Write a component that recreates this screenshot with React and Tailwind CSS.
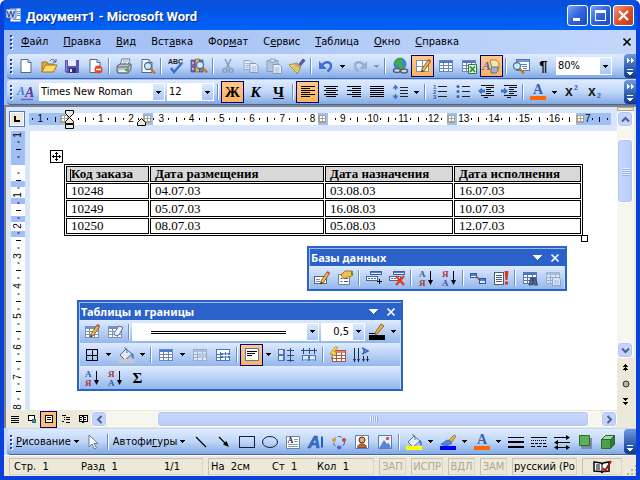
import React from "react";

const cx = (...a) => a.filter(Boolean).join(" ");

/* ---------- primitives ---------- */

const Svg = ({ w = 16, h = 16, children, crisp }) => (
  <svg width={w} height={h} viewBox={`0 0 ${w} ${h}`} fill="none" className="shrink-0 overflow-visible" shapeRendering={crisp ? "crispEdges" : undefined} aria-hidden="true">
    {children}
  </svg>
);

const Btn = ({ label, on, children }) => (
  <button type="button" aria-label={label} title={label} className={cx("flex h-[22px] w-[23px] shrink-0 items-center justify-center", on && "border border-[#000080] bg-linear-to-b from-[#ffc98a] to-[#fbb25e]")}>
    {children}
  </button>
);

const Tri = ({ color = "#000" }) => (
  <Svg w={5} h={3} crisp><path d="M0 0h5v1h-1v1h-1v1h-1v-1h-1v-1h-1z" fill={color} /></Svg>
);

const Drop = ({ label, color }) => (
  <button type="button" aria-label={label} className="flex h-[22px] w-[11px] shrink-0 items-center justify-center"><Tri color={color} /></button>
);

const Sep = () => (
  <span className="flex w-[6px] shrink-0 justify-center"><span className="h-4 w-px bg-[#6a8ccb]" /><span className="h-4 w-px bg-white" /></span>
);

const Grip = () => (
  <span className="flex w-[6px] shrink-0 flex-col items-center gap-[2px]">
    {[0, 1, 2, 3].map((i) => <span key={i} className="h-[2px] w-[2px] bg-[#27418e] shadow-[1px_1px_0_#fff]" />)}
  </span>
);

const Combo = ({ label, value, className, line, right }) => (
  <span className={cx("relative flex h-[18px] shrink-0 items-stretch bg-white", className)}>
    <select aria-label={label} defaultValue={value} className={cx("w-full appearance-none bg-transparent pr-4 pl-[2px] text-[11px] leading-4 outline-none", right && "text-right", line && "text-transparent")}>
      <option>{value}</option>
    </select>
    {line && <span className="pointer-events-none absolute top-[8px] right-[33px] left-[19px] h-[3px] border-y border-black" />}
    <span className="pointer-events-none absolute inset-y-px right-px flex w-[11px] items-center justify-center bg-linear-to-b from-[#dce9fc] to-[#a9c6f2]"><Tri /></span>
  </span>
);

const OptionsCap = ({ more }) => (
  <button type="button" aria-label="Параметры панелей инструментов" className="ml-auto flex w-[12px] shrink-0 flex-col items-center justify-between self-stretch rounded-l-sm bg-linear-to-b from-[#7199dc] via-[#3767b8] to-[#11388c] pt-1 pb-[3px]">
    <Svg w={7} h={5} crisp>{more && <path d="M0 0h1v1h1v1h1v1h-1v1h-1v1h-1zM4 0h1v1h1v1h1v1h-1v1h-1v1h-1z" fill="#fff" />}</Svg>
    <Svg w={6} h={6} crisp><path d="M0 0h6v1h-6zM0 3h6v1h-1v1h-1v1h-2v-1h-1v-1h-1z" fill="#fff" /></Svg>
  </button>
);

const Bar = ({ className, children }) => (
  <div role="toolbar" className={cx("ml-[3px] flex shrink-0 items-center overflow-hidden rounded-l-sm border-b border-[#3f66b2] bg-linear-to-b from-[#dfebfe] via-[#c0d7f8] to-[#82a9e4] pl-px", className)}>
    {children}
  </div>
);

/* ---------- icons ---------- */

const page = "M3 1.5h7l3 3v10h-10z";
const PageI = ({ children }) => (
  <Svg>
    <path d={page} fill="#fff" stroke="#55668c" />
    <path d="M10 1.5v3h3" stroke="#55668c" fill="#d6e0f2" />
    {children}
  </Svg>
);
const Lens = ({ x = 0, y = 0 }) => (
  <g transform={`translate(${x} ${y})`}>
    <path d="M9.5 9.5l4.500 5" stroke="#c27a1c" strokeWidth="2.5" />
    <circle cx="7" cy="7" r="3.5" fill="#cfeaf8" stroke="#51719b" strokeWidth="1.3" />
  </g>
);
const OpenI = () => (
  <Svg>
    <path d="M1 14v-10h5l1 2h6v2" fill="#e0a93b" stroke="#a97414" />
    <path d="M1 14l3.500-7h11.500l-3.500 7z" fill="#ffda72" stroke="#a97414" />
    <path d="M9 3c2-3 4-2 5 1m1-3v3h-3" stroke="#3c62b0" />
  </Svg>
);
const SaveI = () => (
  <Svg crisp>
    <path d="M1 2h14v13h-13l-1-1z" fill="#5a52b8" />
    <path d="M4 2h8v6h-8z" fill="#e8ecfa" />
    <path d="M2 3h1v10h-1z" fill="#8f88dc" />
    <path d="M5 10h7v5h-7z" fill="#33306f" />
    <path d="M6 11h2v3h-2z" fill="#dfe4f4" />
  </Svg>
);
const PrintI = () => (
  <Svg>
    <path d="M6 1h8l-2 6h-8z" fill="#fff" stroke="#6c7688" />
    <path d="M7 3h5M6.500 5h4" stroke="#8aa0c8" />
    <path d="M1 8l3-2h11v5l-3 4h-10l-1-1z" fill="#bcc3cc" stroke="#535c6b" />
    <path d="M1.500 9h10.500v5.500M12 9l3-3" stroke="#616b78" />
    <path d="M3 12h7v2h-7z" fill="#efefef" />
    <path d="M9 11h4v2h-4z" fill="#2fc02f" />
  </Svg>
);
const SpellI = () => (
  <Svg>
    <text x="0" y="6" fontSize="7" fontWeight="700" fontFamily="Liberation Sans, sans-serif" fill="#1c1c1c">ABC</text>
    <path d="M3 10l3 4 8-9" stroke="#3c6ed0" strokeWidth="2.4" />
  </Svg>
);
const BookI = () => (
  <Svg>
    <path d="M0 2h4v12h-4z" fill="#7664c2" stroke="#463a88" strokeWidth=".7" />
    <path d="M4.500 1h4v13h-4z" fill="#e4b04a" stroke="#8c6514" strokeWidth=".7" />
    <path d="M8.500 2h3.500v12h-3.500z" fill="#6487d4" stroke="#324e92" strokeWidth=".7" />
    <path d="M1 5h2M5.500 4h2M1 11h2" stroke="#fff" />
    <Lens x={2} />
  </Svg>
);
const CutI = () => (
  <Svg>
    <path d="M5 1l4.500 9M11 1l-4.500 9" stroke="#8c9dbc" strokeWidth="1.6" />
    <circle cx="5" cy="12.500" r="2" stroke="#8c9dbc" strokeWidth="1.6" />
    <circle cx="11" cy="12.500" r="2" stroke="#8c9dbc" strokeWidth="1.6" />
  </Svg>
);
const CopyI = () => (
  <Svg>
    <path d="M1 2.500h6l2 2v7h-8z" fill="#dfe8f7" stroke="#93a6c8" />
    <path d="M2.500 5.500h4M2.500 7.500h5M2.500 9.500h3" stroke="#a5b5d2" />
    <path d="M7 5.500h6l2 2v7h-8z" fill="#e9effa" stroke="#8699bd" />
    <path d="M8.500 9h5M8.500 11h5M8.500 13h5" stroke="#a5b5d2" />
  </Svg>
);
const PasteI = () => (
  <Svg>
    <path d="M1 2.500h11v11h-11z" fill="#b4c3de" stroke="#8a9cbe" />
    <path d="M4 1h5v3h-5z" fill="#dde6f5" stroke="#8a9cbe" />
    <path d="M7 6.500h6l2.500 2v7h-8.500z" fill="#e9effa" stroke="#8699bd" />
    <path d="M8.500 10h5M8.500 12h5M8.500 14h5" stroke="#a5b5d2" />
  </Svg>
);
const BrushI = () => (
  <Svg>
    <path d="M10 6l4-5 2 1.500-4 5z" fill="#5464b8" stroke="#2c3778" strokeWidth=".7" />
    <path d="M0 7l8-2 4 4-4 6.500c-2-3-5-5-8-8.500z" fill="#f6de7c" stroke="#94701c" strokeWidth=".8" />
    <path d="M7 5l5 4-1.500 2-5.500-5z" fill="#b8a468" />
    <path d="M3 8l5 5M5 7l4 5" stroke="#b98f2c" strokeWidth=".8" />
  </Svg>
);
const UndoI = ({ color, flip }) => (
  <Svg>
    <g transform={flip ? "translate(16 0) scale(-1 1)" : undefined}>
      <path d="M4 8c2-5 9-5 9 0 0 2-1.500 4-3.500 5.500" stroke={color} strokeWidth="2.4" />
      <path d="M1 3v8h8z" fill={color} />
    </g>
  </Svg>
);
const LinkI = () => (
  <Svg>
    <circle cx="8" cy="6" r="6" fill="#3d86d8" stroke="#285190" strokeWidth=".6" />
    <path d="M3 3c2-3 6-3 8-1l-2 3 3 3-3 4-2-1-1-4-3-1z" fill="#3fae3f" />
    <ellipse cx="5" cy="12.500" rx="3.500" ry="2" stroke="#4f5f74" strokeWidth="1.5" fill="#cfd9e6" />
    <ellipse cx="12" cy="13" rx="3.500" ry="2" stroke="#4f5f74" strokeWidth="1.5" fill="#cfd9e6" />
  </Svg>
);
const Pencil = () => (
  <g>
    <path d="M7 11l6-9 2.500 1.500-6 9-3 1.500z" fill="#f2b64c" stroke="#7a4a10" strokeWidth=".8" />
    <path d="M12.500 2.500l1-1.500 2.500 1.500-1 1.500z" fill="#c0504d" />
    <path d="M6.500 14l.5-2 1.500 1z" fill="#111" />
  </g>
);
const grid = (c, head, bg = "#fff") => (
  <g shapeRendering="crispEdges">
    <path d="M1 2h14v12h-14z" fill={bg} />
    <path d="M1 2h14v3h-14z" fill={head} />
    <path d="M1.500 2v12M5.500 5v9M10.500 5v9M14.500 2v12M1 2.500h14M1 7.500h14M1 10.500h14M1 13.500h14" stroke={c} />
  </g>
);
const TableI = () => <Svg>{grid("#6a87bd", "#4a78cf")}</Svg>;
const TablePenI = () => (
  <Svg>
    <g shapeRendering="crispEdges"><path d="M1 2h13v12h-13z" fill="#fff" /><path d="M1.500 2v12M7.500 2v12M13.500 2v12M1 2.500h13M1 8.500h13M1 13.500h13" stroke="#7c8fae" /></g>
    <Pencil />
  </Svg>
);
const ExcelI = () => (
  <Svg>
    {grid("#6a87bd", "#4a78cf")}
    <path d="M7.500 6.500h8v9h-8z" fill="#e6f5e2" stroke="#2f7d32" />
    <path d="M9 8.500l5 5.500M14 8.500l-5 5.500" stroke="#2f8c33" strokeWidth="1.8" />
  </Svg>
);
const DrawI = () => (
  <Svg>
    <path d="M6 2h6l3 3v5l-3 1h-4z" fill="#f4e3a8" stroke="#8c7430" strokeWidth=".8" />
    <text x="-2" y="12" fontSize="13" fontWeight="700" fontStyle="italic" fontFamily="Liberation Serif, serif" fill="#4f63c4">A</text>
    <path d="M8 9h6v4l-2 2h-5v-4z" fill="#9fb0c8" stroke="#4c5f80" strokeWidth=".8" />
  </Svg>
);
const MapI = () => (
  <Svg>
    <g shapeRendering="crispEdges"><path d="M3.500 1.500h13v11h-13z" fill="#fff" stroke="#5874a8" /><path d="M4 2h12v2h-12z" fill="#6e9be0" /><path d="M6 6.500h8M9 8.500h5M10 10.500h4" stroke="#5a80c0" /></g>
    <g transform="translate(-3 1)"><Lens /></g>
  </Svg>
);
const Glyph = ({ t, cls }) => <span className={cx("text-[15px] leading-4", cls)}>{t}</span>;
const serif = "font-['Liberation_Serif',serif]";

const Lines = ({ spans }) => (
  <Svg w={16} h={14} crisp>{spans.map(([a, b], i) => <path key={i} d={`M${a} ${i * 2 + 1}.5h${b - a}`} stroke="#000" />)}</Svg>
);
const L = [[1, 15], [1, 10], [1, 15], [1, 10], [1, 15], [1, 10]];
const C = [[1, 15], [3, 13], [1, 15], [3, 13], [1, 15], [3, 13]];
const R = [[1, 15], [6, 15], [1, 15], [6, 15], [1, 15], [6, 15]];
const J = [[1, 15], [1, 15], [1, 15], [1, 15], [1, 15], [1, 15]];

const SpacingI = () => (
  <Svg>
    <path d="M3.500 2v4M3.500 10v4" stroke="#3465b8" /><path d="M0.500 4.500l3-4 3 4zM0.500 11.500l3 4 3-4z" fill="#3b74cf" />
    <path d="M8 3.500h8M8 6.500h8M8 9.500h8M8 12.500h8" stroke="#222" shapeRendering="crispEdges" />
  </Svg>
);
const NumI = () => (
  <Svg>
    {[1, 2, 3].map((n) => <text key={n} x="1" y={n * 5} fontSize="6" fontWeight="700" fontFamily="Liberation Sans, sans-serif" fill="#2f5cb4">{n}</text>)}
    <path d="M6 2.500h9M6 7.500h9M6 12.500h9" stroke="#222" shapeRendering="crispEdges" />
  </Svg>
);
const BulI = () => (
  <Svg>
    {[2.5, 7.5, 12.5].map((y) => <circle key={y} cx="3" cy={y} r="1.500" fill="#3a62b5" />)}
    <path d="M7 2.500h8M7 7.500h8M7 12.500h8" stroke="#222" shapeRendering="crispEdges" />
  </Svg>
);
const IndentI = ({ right }) => (
  <Svg>
    <path d="M3 1.500h13M8 3.500h8M8 5.500h5M8 7.500h8M8 9.500h5M3 11.500h13M6 13.500h4" stroke="#111" shapeRendering="crispEdges" />
    <path d={right ? "M0 5.500h3v-2l4 3.500-4 3.500v-2h-3z" : "M7 5.500h-3v-2l-4 3.500 4 3.500v-2h3z"} fill="#3c72d0" />
  </Svg>
);
const ColorA = () => (
  <Svg>
    <text x="3" y="10" fontSize="14" fontWeight="700" fontFamily="Liberation Serif, serif" fill="#3a5fae">A</text>
    <path d="M0 12h16v4h-16z" fill="#ff6600" />
  </Svg>
);
const XI = ({ sub }) => (
  <Svg>
    <text x="1" y="12" fontSize="14" fontWeight="700" fontFamily="Liberation Sans, sans-serif" fill="#1c1c1c">x</text>
    <text x="10" y={sub ? 14 : 6} fontSize="7" fontWeight="700" fontFamily="Liberation Sans, sans-serif" fill="#3465b8">2</text>
  </Svg>
);
const SortI = ({ desc }) => (
  <Svg>
    <text x="1" y="7" fontSize="9" fontWeight="700" fontFamily="Liberation Serif, serif" fill={desc ? "#a33a3a" : "#39599f"}>{desc ? "Я" : "А"}</text>
    <text x="1" y="16" fontSize="9" fontWeight="700" fontFamily="Liberation Serif, serif" fill={desc ? "#39599f" : "#a33a3a"}>{desc ? "А" : "Я"}</text>
    <path d="M12.500 1v11" stroke="#000" /><path d="M10 10h5l-2.500 5z" fill="#000" />
  </Svg>
);
const RecI = ({ del }) => (
  <Svg>
    <g shapeRendering="crispEdges"><path d="M4.500 1.500h11v3h-11z" fill="#dbe7fb" stroke="#3c5fa8" /><path d="M5 2h10v1h-10z" fill="#4e7fd8" /><path d="M0.500 6.500h11v4h-11z" fill="#fff" stroke="#50658c" /><path d="M2 8.500h2M5 8.500h2M8 8.500h2" stroke="#50658c" /></g>
    {del ? <path d="M7 6l8 9M15 6l-8 9" stroke="#e8391c" strokeWidth="2.4" /> : <path d="M13.500 9v5M11 11.500h5" stroke="#000" shapeRendering="crispEdges" />}
  </Svg>
);
const FormI = () => (
  <Svg>
    <path d="M1.500 4.500h11v10h-11z" fill="#fff" stroke="#707c92" /><path d="M3.500 8.500h2M3.500 11.500h2M7 8.500h4M7 11.500h4" stroke="#556" />
    <path d="M4 5l4-4h7l1 4-3 2h-3l-3 2z" fill="#f0c04a" stroke="#8a6418" strokeWidth=".8" /><path d="M14 1h2v4h-2z" fill="#3fa23f" />
  </Svg>
);
const EditI = () => (
  <Svg>
    <g shapeRendering="crispEdges"><path d="M0.500 6.500h12v7h-12z" fill="#fff" stroke="#50658c" /><path d="M2 9.500h4M2 11.500h4" stroke="#7b8aa8" /></g>
    <Pencil />
  </Svg>
);
const MergeI = () => (
  <Svg><g shapeRendering="crispEdges"><path d="M0.500 3.500h6v4h-6z" fill="#4e7fd8" stroke="#2f559c" /><path d="M9.500 8.500h6v5h-6z" fill="#dbe7fb" stroke="#2f559c" /><path d="M10 9h5v2h-5z" fill="#4e7fd8" /><path d="M1 6h5v1h-5z" fill="#fff" /></g><path d="M7 7l2.500 3" stroke="#c2352b" strokeWidth="1.400" /></Svg>
);
const ReportI = () => (
  <Svg><g shapeRendering="crispEdges"><path d="M1.500 2.500h9v12h-9z" fill="#fff" stroke="#4e5a70" /><path d="M3 5.500h6M3 7.500h6M3 9.500h6M3 11.500h6" stroke="#4e5a70" /></g><path d="M11.500 1h4l-1 9h-2zM12 11.500h3v3h-3z" fill="#d8361c" /></Svg>
);
const FindI = () => (
  <Svg>{grid("#5b77ad", "#4a78cf")}<path d="M7 15l1.500-7h2v3h1v-3h2l2 7h-3.500v-2h-1.500v2z" fill="#53698f" stroke="#263a60" strokeWidth=".8" /></Svg>
);
const InsI = () => (
  <Svg><g opacity=".75">{grid("#93a6c8", "#9fb3d6", "#e6edf9")}<path d="M7.500 7.500h6l2 2v6h-8z" fill="#e9effa" stroke="#8699bd" /><path d="M9 11h5M9 13h5" stroke="#a5b5d2" /></g></Svg>
);
const DrawTab = ({ erase }) => (
  <Svg>{grid("#7c90b4", "#6f93d2")}{erase ? <path d="M7 9l5-7 4 1.500-4 7.500-4 .500z" fill="#eef2fb" stroke="#66738c" /> : <g transform="translate(0 -1)"><Pencil /></g>}</Svg>
);
const Bucket = ({ bar, gray }) => (
  <Svg>
    <path d="M2 8l6-6 6 5-7 6z" fill={gray ? "#e1e8f3" : "#e8eff9"} stroke="#55698c" />
    <path d="M6 1c2-1 3 1 3 5" stroke="#55698c" /><path d="M13 6c3 0 3 3 2.500 6-1.500 0-2-3-2.500-6z" fill="#3f76d2" />
    <path d="M0 12h16v4h-16z" fill={bar} />
  </Svg>
);
const BrushLine = () => (
  <Svg>
    <path d="M9 6l5-5 2 1-4 6z" fill="#e8b44c" stroke="#8a5c14" strokeWidth=".7" /><path d="M1 10c2 0 3-3 7-4l4 3c-3 3-8 3-11 1z" fill="#4d86dd" stroke="#2d579c" strokeWidth=".7" />
    <path d="M0 12h16v4h-16z" fill="#0000ff" />
  </Svg>
);
const PenColor = () => (
  <Svg><path d="M0 9.500h7" stroke="#000" /><path d="M6 9l6-9 3 2-7 8-2 .500z" fill="#efae4a" stroke="#7a4a10" strokeWidth=".8" /><path d="M0 11h16v5h-16z" fill="#000" /></Svg>
);
const Chevron = ({ dir }) => (
  <Svg w={9} h={9}><path d={{ up: "M1 6.500l3.500-3.500 3.500 3.500", down: "M1 2.500l3.500 3.500 3.500-3.500", left: "M6.500 1l-3.500 3.500 3.500 3.500", right: "M2.500 1l3.500 3.500-3.500 3.500" }[dir]} stroke="#4d6185" strokeWidth="2" /></Svg>
);

/* ---------- pieces ---------- */

const ScrollBtn = ({ dir, label }) => (
  <button type="button" aria-label={label} className="flex size-4 shrink-0 items-center justify-center rounded-sm border border-white bg-[#c3d3fc] shadow-[inset_0_0_0_1px_#b4c8f6]"><Chevron dir={dir} /></button>
);

const menus = [["", "Ф", "айл"], ["", "П", "равка"], ["", "В", "ид"], ["Вст", "а", "вка"], ["Фор", "м", "ат"], ["С", "е", "рвис"], ["", "Т", "аблица"], ["", "О", "кно"], ["", "С", "правка"]];

const scale = (count, zero) =>
  Array.from({ length: count }, (_, i) => {
    const q = i - zero;
    if (q === 0) return "";
    if (q % 4 === 0) return String(Math.abs(q / 4));
    return q % 2 === 0 ? "|" : ".";
  });

const Mark = ({ m }) =>
  m === "|" ? <span className="h-[5px] w-px bg-black" /> : m === "." ? <span className="h-[2px] w-px bg-black" /> : m;

const hScale = scale(77, 5);
const vScale = scale(37, 4);

const ColMark = ({ className }) => (
  <span className={cx("absolute inset-y-0 w-[10px] bg-[#a0bff5] py-[2px]", className)}>
    <span className="block h-[8px] w-[8px] border border-[#a8a290] bg-[repeating-linear-gradient(90deg,#a8a290_0_1px,transparent_1px_3px),repeating-linear-gradient(0deg,#a8a290_0_1px,#fff_1px_3px)]" />
  </span>
);

const heads = ["Код заказа", "Дата размещения", "Дата назначения", "Дата исполнения"];
const rows = [
  ["10248", "04.07.03", "03.08.03", "16.07.03"],
  ["10249", "05.07.03", "16.08.03", "10.07.03"],
  ["10250", "08.07.03", "05.08.03", "12.07.03"],
];

const Floating = ({ title, className, children }) => (
  <section aria-label={title} className={cx("absolute border-2 border-[#2a62c9] bg-[#2a62c9]", className)}>
    <div className="flex h-[18px] items-center border-t border-l border-[#9dbdf0] pr-1 pl-px text-white">
      <h2 className="grow font-['Noto_Sans','DejaVu_Sans',sans-serif] text-[11px] leading-4 font-bold">{title}</h2>
      <button type="button" aria-label="Параметры" className="mr-[6px] flex size-3 items-center justify-center"><Svg w={9} h={5} crisp><path d="M0 0h9v1h-1v1h-1v1h-1v1h-1v1h-1v-1h-1v-1h-1v-1h-1v-1h-1z" fill="#fff" /></Svg></button>
      <button type="button" aria-label="Закрыть" className="flex size-3 items-center justify-center"><Svg w={8} h={8}><path d="M.5.5l7 7M7.500.5l-7 7" stroke="#fff" strokeWidth="1.600" /></Svg></button>
    </div>
    {children}
  </section>
);

const FRow = ({ children }) => (
  <div className="flex h-[23px] items-center border-x border-[#c9dcfa] bg-linear-to-b from-[#dfebfe] to-[#94b7ec]">{children}</div>
);

const WinBtn = ({ label, red, children }) => (
  <button type="button" aria-label={label} className={cx("flex size-[21px] items-center justify-center rounded-[3px] border border-white", red ? "bg-linear-to-br from-[#f0927a] via-[#e0512c] to-[#b83a18]" : "bg-linear-to-br from-[#7ba2f5] via-[#2f62dc] to-[#1b49c0]")}>{children}</button>
);

const Panel = ({ className, children }) => (
  <span className={cx("flex h-[17px] shrink-0 items-center border border-t-[#c5c2b5] border-r-[#d8d5c8] border-b-[#d8d5c8] border-l-[#c5c2b5] whitespace-pre", className)}>{children}</span>
);

/* ---------- app ---------- */

export default function App() {
  return (
    <div className="flex h-screen min-h-[400px] w-full flex-col overflow-hidden rounded-t-md border-x-4 border-b-4 border-[#0a41d8] bg-[#0a41d8] font-['DejaVu_Sans_Condensed','DejaVu_Sans',sans-serif] text-[11px] leading-4 text-black">
      {/* title bar */}
      <header className="-mx-1 flex h-[30px] shrink-0 items-center gap-[4px] rounded-t-md bg-linear-to-b from-[#0a4fd8] via-[#0058ea] to-[#0062f8] pr-[6px] pl-[6px]">
        <Svg>
          <path d="M4.500 1.500h10v13h-10z" fill="#fff" stroke="#8aa5d8" /><path d="M11 4.500h3M11 6.500h3M11 8.500h3M7 12.500h7" stroke="#6487c8" />
          <path d="M0 2h10v9h-10z" fill="#dce8fb" stroke="#2b55a8" strokeWidth=".8" />
          <text x="0.500" y="10" fontSize="9" fontWeight="700" fontFamily="Liberation Sans, sans-serif" fill="#1f4ca8">W</text>
        </Svg>
        <h1 className="grow pt-[4px] font-['Roboto','Noto_Sans',sans-serif] text-[13px] leading-4 font-bold text-white [text-shadow:1px_1px_0_#0a2a80]">Документ1 - Microsoft Word</h1>
        <div className="flex gap-[2px]">
          <WinBtn label="Свернуть"><Svg w={13} h={13} crisp><path d="M2 9h7v3h-7z" fill="#fff" /></Svg></WinBtn>
          <WinBtn label="Развернуть"><Svg w={13} h={13} crisp><path d="M1.500 1.500h10v10h-10z" stroke="#fff" /><path d="M1 1h11v3h-11z" fill="#fff" /></Svg></WinBtn>
          <WinBtn label="Закрыть" red><Svg w={13} h={13}><path d="M2 2l9 9M11 2l-9 9" stroke="#fff" strokeWidth="2.200" /></Svg></WinBtn>
        </div>
      </header>

      {/* menus and toolbars */}
      <div className="shrink-0 bg-linear-to-r from-[#9ebdf5] to-[#c3d7fa]">
        <nav className="flex h-6 items-center gap-[15px] pr-1 pl-1">
          <Grip />
          {menus.map(([a, b, c], i) => (
            <button type="button" key={i} className={cx("shrink-0", i === 0 && "-ml-2")}>{a}<u>{b}</u>{c}</button>
          ))}
          <button type="button" aria-label="Закрыть документ" className="mr-[1px] ml-auto"><Svg w={8} h={8}><path d="M.5.5l7 7M7.500.5l-7 7" stroke="#000" strokeWidth="1.600" /></Svg></button>
        </nav>

        <Bar className="h-[25px]">
          <Grip />
          <Btn label="Создать"><PageI /></Btn>
          <Btn label="Открыть"><OpenI /></Btn>
          <Btn label="Сохранить"><SaveI /></Btn>
          <Btn label="Разрешение"><PageI><circle cx="11.500" cy="11.500" r="4" fill="#e0492a" /><path d="M9 11.500h5" stroke="#fff" strokeWidth="1.600" /></PageI></Btn>
          <Sep />
          <Btn label="Печать"><PrintI /></Btn>
          <Btn label="Предварительный просмотр"><PageI><Lens x={2} y={1} /></PageI></Btn>
          <Sep />
          <Btn label="Правописание"><SpellI /></Btn>
          <Btn label="Справочники"><BookI /></Btn>
          <Sep />
          <Btn label="Вырезать"><CutI /></Btn>
          <Btn label="Копировать"><CopyI /></Btn>
          <Btn label="Вставить"><PasteI /></Btn>
          <Btn label="Формат по образцу"><BrushI /></Btn>
          <Sep />
          <Btn label="Отменить"><UndoI color="#3d72d0" /></Btn>
          <Drop label="Список отмены" />
          <Btn label="Вернуть"><UndoI color="#98aed4" flip /></Btn>
          <Drop label="Список возврата" color="#8c93a8" />
          <Sep />
          <Btn label="Гиперссылка"><LinkI /></Btn>
          <Btn label="Таблицы и границы" on><TablePenI /></Btn>
          <Btn label="Добавить таблицу"><TableI /></Btn>
          <Btn label="Добавить таблицу Excel"><ExcelI /></Btn>
          <Btn label="Рисование" on><DrawI /></Btn>
          <Sep />
          <Btn label="Схема документа"><MapI /></Btn>
          <Btn label="Непечатаемые знаки"><Glyph t="¶" cls="font-['Liberation_Sans',sans-serif] font-bold" /></Btn>
          <Combo label="Масштаб" value="80%" className="ml-px w-14" />
          <OptionsCap more />
        </Bar>

        <Bar className="mt-px h-[25px]">
          <Grip />
          <Btn label="Стили">
            <Svg><text x="-1" y="11" fontSize="12" fontStyle="italic" fontFamily="Liberation Serif, serif" fontWeight="700" fill="#4a78cf">A</text><text x="7" y="13" fontSize="14" fontStyle="italic" fontFamily="Liberation Serif, serif" fontWeight="700" fill="#5a3a9c">A</text><path d="M3 15.500h12" stroke="#8a5ac8" strokeWidth="1.500" /></Svg>
          </Btn>
          <Combo label="Шрифт" value="Times New Roman" className="ml-[2px] w-[126px]" />
          <Combo label="Размер" value="12" className="mr-px ml-[2px] w-[47px]" />
          <Sep />
          <Btn label="Полужирный" on><Glyph t="Ж" cls={cx(serif, "font-bold")} /></Btn>
          <Btn label="Курсив"><Glyph t="К" cls={cx(serif, "font-bold italic")} /></Btn>
          <Btn label="Подчеркнутый"><Glyph t="Ч" cls={cx(serif, "font-bold underline")} /></Btn>
          <Sep />
          <Btn label="По левому краю" on><Lines spans={L} /></Btn>
          <Btn label="По центру"><Lines spans={C} /></Btn>
          <Btn label="По правому краю"><Lines spans={R} /></Btn>
          <Btn label="По ширине"><Lines spans={J} /></Btn>
          <Btn label="Междустрочный интервал"><SpacingI /></Btn>
          <Drop label="Выбор интервала" />
          <Sep />
          <Btn label="Нумерация"><NumI /></Btn>
          <Btn label="Маркеры"><BulI /></Btn>
          <Btn label="Уменьшить отступ"><IndentI /></Btn>
          <Btn label="Увеличить отступ"><IndentI right /></Btn>
          <Sep />
          <Btn label="Цвет шрифта"><ColorA /></Btn>
          <Drop label="Выбор цвета шрифта" />
          <Btn label="Надстрочный"><XI /></Btn>
          <Btn label="Подстрочный"><XI sub /></Btn>
          <OptionsCap more />
        </Bar>
      </div>

      {/* document */}
      <main className="relative flex min-h-0 grow border-t-2 border-l-2 border-[#858278] bg-[#d8e6fb]">
        <div className="flex min-w-0 grow flex-col">
          <div className="flex h-6 shrink-0 items-center">
            <button type="button" aria-label="Тип табуляции" className="ml-[3px] flex size-[16px] shrink-0 items-center justify-center border border-[#4a78cf] bg-[#ece9d8] shadow-[inset_0_0_0_1px_#fff]"><Svg w={6} h={6} crisp><path d="M0 0h2v4h4v2h-6z" fill="#000" /></Svg></button>
            <div className="relative ml-[4px] h-3 w-[582px] shrink-0 bg-white font-['Liberation_Sans',sans-serif] text-[10px] leading-3">
              <span className="absolute inset-y-0 left-0 w-[34px] bg-[#a0bff5]" />
              <span className="absolute inset-y-0 right-0 w-[28px] bg-[#a0bff5]" />
              <div className="relative flex h-3">
                {hScale.map((m, i) => <span key={i} className="flex min-w-0 flex-1 items-center justify-center">{i === 73 ? "" : <Mark m={m} />}</span>)}
              </div>
              <ColMark className="left-[31px]" />
              <ColMark className="left-[114px]" />
              <ColMark className="left-[289px]" />
              <ColMark className="left-[418px]" />
              <ColMark className="left-[547px]" />
              <span className="absolute top-0 left-[556px]">7</span>
              <span className="absolute -top-[3px] left-[36px]">
                <Svg w={10} h={20}><path d="M.5 .5h8v3l-4 4-4-4zM.5 13.500v-2l4-4 4 4v2zM.5 14.500h8v4h-8z" fill="#ece9d8" stroke="#000" /></Svg>
              </span>
              <span className="absolute top-[5px] left-[108px]"><Svg w={10} h={8}><path d="M.5 7.500v-3l4-4 4 4v3z" fill="#ece9d8" stroke="#000" /></Svg></span>
            </div>
          </div>

          <div className="flex min-h-0 grow overflow-hidden">
            <div className="w-6 shrink-0 overflow-hidden">
              <div className="relative ml-[5px] h-[280px] w-[14px] bg-white font-['Liberation_Sans',sans-serif] text-[10px] leading-3">
                <span className="absolute inset-x-0 top-0 h-[34px] bg-[#a0bff5]" />
                <span className="absolute inset-x-0 top-[50px] h-[6px] bg-[#a0bff5]" />
                <span className="absolute inset-x-0 top-[67px] h-[6px] bg-[#a0bff5]" />
                <span className="absolute inset-x-0 top-[85px] h-[6px] bg-[#a0bff5]" />
                <span className="absolute inset-x-0 top-[100px] h-[6px] bg-[#a0bff5]" />
                <div className="relative flex h-full flex-col">
                  {vScale.map((m, i) => (
                    <span key={i} className="flex min-h-0 flex-1 items-center justify-center"><span className="flex -rotate-90 items-center justify-center"><Mark m={m} /></span></span>
                  ))}
                </div>
              </div>
            </div>

            <article className="grow bg-white pt-[33px] pl-[34px] font-['Liberation_Serif',serif] text-[13px] leading-[14px]">
              <div className="relative w-[519px]">
                <table className="w-full table-fixed border-separate border-spacing-px border border-black">
                  <colgroup><col className="w-[83px]" /><col className="w-[174px]" /><col className="w-[128px]" /><col /></colgroup>
                  <thead>
                    <tr>{heads.map((h, i) => <th key={h} className="h-[16px] border border-black bg-[#d8d8d8] px-[4px] py-0 text-left font-bold whitespace-nowrap">{i === 0 && <span className="-ml-px inline-block h-3 w-px bg-black align-middle" />}{h}</th>)}</tr>
                  </thead>
                  <tbody>
                    {rows.map((r, i) => <tr key={r[0]}>{r.map((c) => <td key={c} className={cx("border border-black px-[4px] py-0", i === 1 ? "h-[17px]" : "h-[16px]")}>{c}</td>)}</tr>)}
                  </tbody>
                </table>
                <span className="absolute -top-[14px] -left-[14px] flex size-[13px] items-center justify-center border border-black bg-white"><Svg w={9} h={9} crisp><path d="M4 0h1v4h4v1h-4v4h-1v-4h-4v-1h4zM3 1h3v1h-3zM3 7h3v1h-3zM1 3h1v3h-1zM7 3h1v3h-1z" fill="#000" /></Svg></span>
                <span className="absolute -right-[5px] -bottom-[6px] size-[7px] border border-black bg-white" />
              </div>
            </article>
          </div>

          {/* view buttons and horizontal scroll */}
          <div className="flex h-[18px] shrink-0 items-center bg-[#ece9d8]">
            {[
              ["Обычный", <path d="M1 2.500h8M1 4.500h8M1 6.500h8M1 8.500h8" stroke="#000" />],
              ["Веб-документ", <g><path d="M1.500 1.500h6v5h-6z" fill="#fff" stroke="#000" /><path d="M5 5h4v4h-4z" fill="#2f62b8" /><path d="M6 6h2v2h-2z" fill="#3fae3f" /></g>],
              ["Разметка страницы", <g><path d="M1.500 1.500h7v7h-7z" fill="#fff" stroke="#000" /><path d="M3 3.500h4M3 5.500h4" stroke="#000" /></g>],
              ["Структура", <path d="M1 1.500h4M3 3.500h1M5 3.500h4M3 5.500h1M5 5.500h4M1 7.500h2M5 8.500h4" stroke="#000" />],
              ["Чтение", <g><path d="M1 1.500h3l1 1 1-1h3v6h-3l-1 1.500-1-1.500h-3zM5 2v7" fill="#fff" stroke="#000" /><path d="M2 3.500h2M2 5.500h2M6 3.500h2M6 5.500h2" stroke="#000" /></g>],
            ].map(([l, g], i) => (
              <button type="button" key={l} aria-label={l} className={cx("flex size-[17px] shrink-0 items-center justify-center", i === 2 && "border border-[#000080] bg-[#fdbf6f]")}><Svg w={10} h={10} crisp>{g}</Svg></button>
            ))}
            <ScrollBtn dir="left" label="Прокрутка влево" />
            <div className="flex h-4 grow bg-[#f6f5ee] pr-3 pl-[50px]">
              <div className="flex h-4 grow items-center justify-center gap-px rounded-sm border border-white bg-linear-to-b from-[#c9d8fd] to-[#b9cbf8] shadow-[inset_0_0_0_1px_#b0c4f4]">
                {[0, 1, 2, 3].map((i) => <span key={i} className="h-[6px] w-px bg-[#eef4fe] shadow-[1px_0_0_#8cb0f8]" />)}
              </div>
            </div>
            <ScrollBtn dir="right" label="Прокрутка вправо" />
          </div>
        </div>

        <div className="flex w-[19px] shrink-0 flex-col bg-[#ece9d8] pr-[2px]">
          <span className="h-[4px] shrink-0 border border-[#aca899] bg-[#ece9d8]" />
          <div className="flex min-h-0 grow flex-col bg-[#f6f5ee]">
            <ScrollBtn dir="up" label="Прокрутка вверх" />
            <div className="flex grow flex-col pt-[12px]">
              <div className="flex h-[64px] w-4 flex-col items-center justify-center gap-px rounded-sm border border-white bg-linear-to-r from-[#c9d8fd] to-[#b9cbf8] shadow-[inset_0_0_0_1px_#b0c4f4]">
                {[0, 1, 2, 3].map((i) => <span key={i} className="h-px w-[7px] bg-[#eef4fe] shadow-[0_1px_0_#8cb0f8]" />)}
              </div>
            </div>
            <ScrollBtn dir="down" label="Прокрутка вниз" />
          </div>
          <button type="button" aria-label="Назад" className="flex h-[18px] shrink-0 items-center justify-center"><Svg w={5} h={7} crisp><path d="M2 0h1v1h1v1h1v1h-5v-1h1v-1h1zM2 3h1v1h1v1h1v1h-2v1h-1v-1h-2v-1h1v-1h1z" fill="#000" /></Svg></button>
          <button type="button" aria-label="Выбор объекта" className="flex h-[16px] shrink-0 items-center justify-center"><Svg w={8} h={8}><circle cx="4" cy="4" r="3" fill="#b5b2a5" stroke="#333" /></Svg></button>
          <button type="button" aria-label="Вперед" className="mb-[18px] flex h-[18px] shrink-0 items-center justify-center"><Svg w={5} h={7} crisp><path d="M0 0h5v1h-1v1h-1v1h-1v-1h-1v-1h-1zM0 4h5v1h-1v1h-1v1h-1v-1h-1v-1h-1z" fill="#000" /></Svg></button>
        </div>

        <Floating title="Базы данных" className="top-[139px] left-[301px] w-[260px]">
          <FRow>
            <Btn label="Форма данных"><EditI /></Btn><Btn label="Управление полями"><FormI /></Btn><Sep />
            <Btn label="Добавить запись"><RecI /></Btn><Btn label="Удалить запись"><RecI del /></Btn><Sep />
            <Btn label="По возрастанию"><SortI /></Btn><Btn label="По убыванию"><SortI desc /></Btn><Sep />
            <Btn label="Добавить базу данных"><MergeI /></Btn><Btn label="Обновить поле"><ReportI /></Btn><Sep />
            <Btn label="Найти запись"><FindI /></Btn><Btn label="Основной документ"><InsI /></Btn>
          </FRow>
        </Floating>

        <Floating title="Таблицы и границы" className="top-[193px] left-[71px] w-[326px]">
          <FRow>
            <Btn label="Нарисовать таблицу"><DrawTab /></Btn><Btn label="Ластик"><DrawTab erase /></Btn><Sep />
            <Combo label="Тип линии" value="Двойная" line className="w-[187px]" />
            <Combo label="Толщина линии" value="0,5" right className="ml-[2px] w-[44px]" />
            <Btn label="Цвет границы"><PenColor /></Btn><Drop label="Выбор цвета границы" />
          </FRow>
          <FRow>
            <Btn label="Границы"><Svg w={14} h={14} crisp><path d="M1.500 1.500h11v11h-11zM7.500 1v12M1 7.500h12" stroke="#000" /></Svg></Btn><Drop label="Выбор границ" />
            <Btn label="Цвет заливки"><Bucket bar="#c9c9c9" gray /></Btn><Drop label="Выбор заливки" /><Sep />
            <Btn label="Добавить таблицу"><TableI /></Btn><Drop label="Варианты вставки" />
            <Btn label="Объединить ячейки"><Svg>{grid("#9aacca", "#a9bcdc", "#dfe8f7")}<path d="M6 6h8v5h-8z" fill="#b8c9e4" /></Svg></Btn>
            <Btn label="Разбить ячейки"><Svg>{grid("#5673ab", "#fff")}<path d="M6 6h9v5h-9z" fill="#3f6fd0" /><path d="M9 6v5M12 6v5M6 8.500h9" stroke="#fff" /></Svg></Btn><Sep />
            <Btn label="Выравнивание" on><Svg crisp><path d="M1.500 1.500h13v12h-13z" fill="#fff" stroke="#5a77b0" /><path d="M3 4.500h10M3 6.500h8M3 8.500h5" stroke="#000" /></Svg></Btn><Drop label="Варианты выравнивания" />
            <Btn label="Выровнять высоту строк"><Svg crisp><path d="M0.500 2.500h6v5h-6zM0.500 8.500h6v5h-6z" fill="#dfe9fb" stroke="#5673ab" /><path d="M5 3h2v5h-2zM5 9h2v5h-2z" fill="#4a78cf" /><path d="M9 3.500h7M9 8.500h7M9 13.500h7M12.500 1v14" stroke="#2e4a80" /></Svg></Btn>
            <Btn label="Выровнять ширину столбцов"><Svg crisp><path d="M1.500 8.500h6v5h-6zM8.500 8.500h6v5h-6z" fill="#dfe9fb" stroke="#5673ab" /><path d="M2 12h5v2h-5zM9 12h5v2h-5z" fill="#8fb0e8" /><path d="M0 3.500h16M2.500 1v6M8.500 1v6M13.500 1v6" stroke="#2e4a80" /></Svg></Btn><Sep />
            <Btn label="Автоформат таблицы"><Svg><g transform="translate(1 1)">{grid("#a8544a", "#e58a5a")}</g><path d="M5 0l-5 7h3l-2 5 6-7h-3l4-5z" fill="#ffe14a" stroke="#b07a10" strokeWidth=".7" /></Svg></Btn>
            <Btn label="Направление текста"><Svg><path d="M1.500 1v14M5.500 1v14M10.500 9v5M14.500 9v5" stroke="#1c2c50" shapeRendering="crispEdges" /><path d="M0 12h3l-1.500 3zM4 12h3l-1.500 3zM9 12h3l-1.500 3zM13 12h3l-1.500 3z" fill="#1c2c50" /><path d="M9 1l6 3-6 3M11 2v4" stroke="#3a62b5" strokeWidth="1.500" /></Svg></Btn>
          </FRow>
          <FRow>
            <Btn label="Сортировка по возрастанию"><SortI /></Btn><Btn label="Сортировка по убыванию"><SortI desc /></Btn>
            <Btn label="Автосумма"><Glyph t="Σ" cls={cx(serif, "font-bold")} /></Btn>
          </FRow>
        </Floating>
      </main>

      {/* drawing toolbar */}
      <div className="shrink-0 bg-[#c3d7fa] pt-px">
        <Bar className="h-[26px]">
          <Grip />
          <button type="button" className="ml-[2px] flex shrink-0 items-center gap-[3px] pr-[3px]"><span><u>Р</u>исование</span><Tri /></button>
          <Btn label="Выбор объектов"><Svg><path d="M4 1v12l3-3 2.500 5 2-1-2.500-4.500h4z" fill="#fff" stroke="#6a7a98" /></Svg></Btn>
          <Sep />
          <button type="button" className="ml-[2px] flex shrink-0 items-center gap-[3px] pr-[4px]"><span>Автофи<u>г</u>уры</span><Tri /></button>
          <Btn label="Линия"><Svg><path d="M3 3l10 10" stroke="#000" strokeWidth="1.200" /></Svg></Btn>
          <Btn label="Стрелка"><Svg><path d="M3 3l7 7" stroke="#000" strokeWidth="1.200" /><path d="M13 13l-6-2.500 3.500-3.500z" fill="#000" /></Svg></Btn>
          <Btn label="Прямоугольник"><Svg crisp><path d="M.5 2.500h15v11h-15z" stroke="#16203a" /></Svg></Btn>
          <Btn label="Овал"><Svg><ellipse cx="8" cy="8" rx="7.500" ry="5.500" stroke="#16203a" /></Svg></Btn>
          <Btn label="Надпись"><Svg><path d="M1.500 2.500h13v12h-13z" fill="#fff" stroke="#6f7f9c" /><text x="2.500" y="9" fontSize="8" fontWeight="700" fontFamily="Liberation Serif, serif" fill="#16203a">A</text><path d="M9 5.500h4M9 7.500h4M3 10.500h10M3 12.500h10" stroke="#8c9cb8" /></Svg></Btn>
          <Btn label="Объект WordArt"><Svg><text x="0" y="14" fontSize="17" fontWeight="700" fontStyle="italic" fontFamily="Liberation Sans, sans-serif" fill="#3c74d6" stroke="#244e9c" strokeWidth=".6">A</text><path d="M13 2l2 1v10l-2 1z" fill="#2c5cb8" /></Svg></Btn>
          <Btn label="Диаграмма"><Svg><circle cx="8" cy="8" r="5.500" stroke="#445a88" strokeDasharray="4 2" /><circle cx="3" cy="6" r="2" fill="#d8a03c" /><circle cx="13" cy="6" r="2" fill="#c8483c" /><circle cx="8" cy="13.500" r="2" fill="#5a5ac8" /></Svg></Btn>
          <Btn label="Картинка"><Svg><path d="M1.500 1.500h13v13h-13z" fill="#fff" stroke="#5c7ab4" /><circle cx="8" cy="6" r="3" fill="#e8a868" stroke="#4a3020" /><path d="M3.500 13.500c0-5 9-5 9 0z" fill="#c46a28" stroke="#4a3020" strokeWidth=".7" /></Svg></Btn>
          <Btn label="Рисунок"><Svg><path d="M1.500 1.500h13v13h-13z" fill="#e6effc" stroke="#5c7ab4" /><path d="M2 14l5-8 3 4 1.500-1.500 2.500 5.500z" fill="#5a84cf" /><circle cx="10.500" cy="4.500" r="1.800" fill="#e0552c" /></Svg></Btn>
          <Sep />
          <Btn label="Цвет заливки"><Bucket bar="#ffff00" /></Btn><Drop label="Выбор цвета заливки" />
          <Btn label="Цвет линий"><BrushLine /></Btn><Drop label="Выбор цвета линий" />
          <Btn label="Цвет шрифта"><ColorA /></Btn><Drop label="Выбор цвета текста" />
          <Btn label="Тип линии"><Svg crisp><path d="M0 3h16v1h-16zM0 7h16v2h-16zM0 12h16v2h-16z" fill="#000" /></Svg></Btn>
          <Btn label="Тип штриха"><Svg crisp><path d="M0 3.500h16" stroke="#000" /><path d="M0 6.500h16" stroke="#000" strokeDasharray="1 1" /><path d="M0 9.500h16" stroke="#000" strokeDasharray="3 1" /><path d="M0 12.500h16" stroke="#000" strokeDasharray="4 2" /></Svg></Btn>
          <Btn label="Вид стрелки"><Svg><path d="M0 3.500h15M1 8.500h15M1 13.500h14" stroke="#000" /><path d="M12 1l4 2.500-4 2.500zM4 6l-4 2.500 4 2.500zM4 11l-4 2.500 4 2.500zM12 11l4 2.500-4 2.500z" fill="#000" /></Svg></Btn>
          <Btn label="Тень"><Svg><path d="M4 4h11v11h-11z" fill="#7f8ba4" /><path d="M2.500 1.500h10v10h-10z" fill="#5fae5a" stroke="#2c6a2c" /></Svg></Btn>
          <Btn label="Объем"><Svg><path d="M1.500 5.500h9v9h-9z" fill="#4f9e4c" stroke="#2c6a2c" /><path d="M1.500 5.500l4-4h9l-4 4z" fill="#a2dc9a" stroke="#2c6a2c" /><path d="M10.500 5.500l4-4v9l-4 4z" fill="#37793a" stroke="#2c6a2c" /></Svg></Btn>
          <OptionsCap />
        </Bar>
      </div>

      {/* status bar */}
      <footer className="flex h-[21px] shrink-0 items-center gap-[5px] border-t border-[#fdfcf8] bg-[#ece9d8] pt-px pl-[5px]">
        <Panel className="w-[194px] pl-[4px]"><span className="w-[67px]">Стр.  1</span><span className="w-[83px]">Разд  1</span><span>1/1</span></Panel>
        <Panel className="w-[166px] pl-[2px]"><span className="w-[61px]">На  2см</span><span className="w-[45px]">Ст  1</span><span>Кол  1</span></Panel>
        <Panel className="w-[27px] justify-center text-[#aca899]">ЗАП</Panel>
        <Panel className="w-[32px] justify-center text-[#aca899]">ИСПР</Panel>
        <Panel className="w-[27px] justify-center text-[#aca899]">ВДЛ</Panel>
        <Panel className="w-[27px] justify-center text-[#aca899]">ЗАМ</Panel>
        <Panel className="w-[65px] pl-px">русский (Ро</Panel>
        <Panel className="w-[40px] justify-center">
          <Svg w={18} h={14}><path d="M1 2l7 1 1 1 1-1 6-1v9l-6 .500-1 1-1-1-7-.500z" fill="#fff" stroke="#000" strokeWidth="1.500" /><path d="M9 4v9M3 5h4M3 7h4M3 9h4" stroke="#000" /><path d="M10 8l2 3 6-10" stroke="#a01818" strokeWidth="2" /></Svg>
        </Panel>
        <span className="mr-px ml-auto self-end"><Svg w={11} h={11} crisp><path d="M8 0h2v2h-2zM4 4h2v2h-2zM8 4h2v2h-2zM0 8h2v2h-2zM4 8h2v2h-2zM8 8h2v2h-2z" fill="#b8b4a2" /></Svg></span>
      </footer>
    </div>
  );
}
